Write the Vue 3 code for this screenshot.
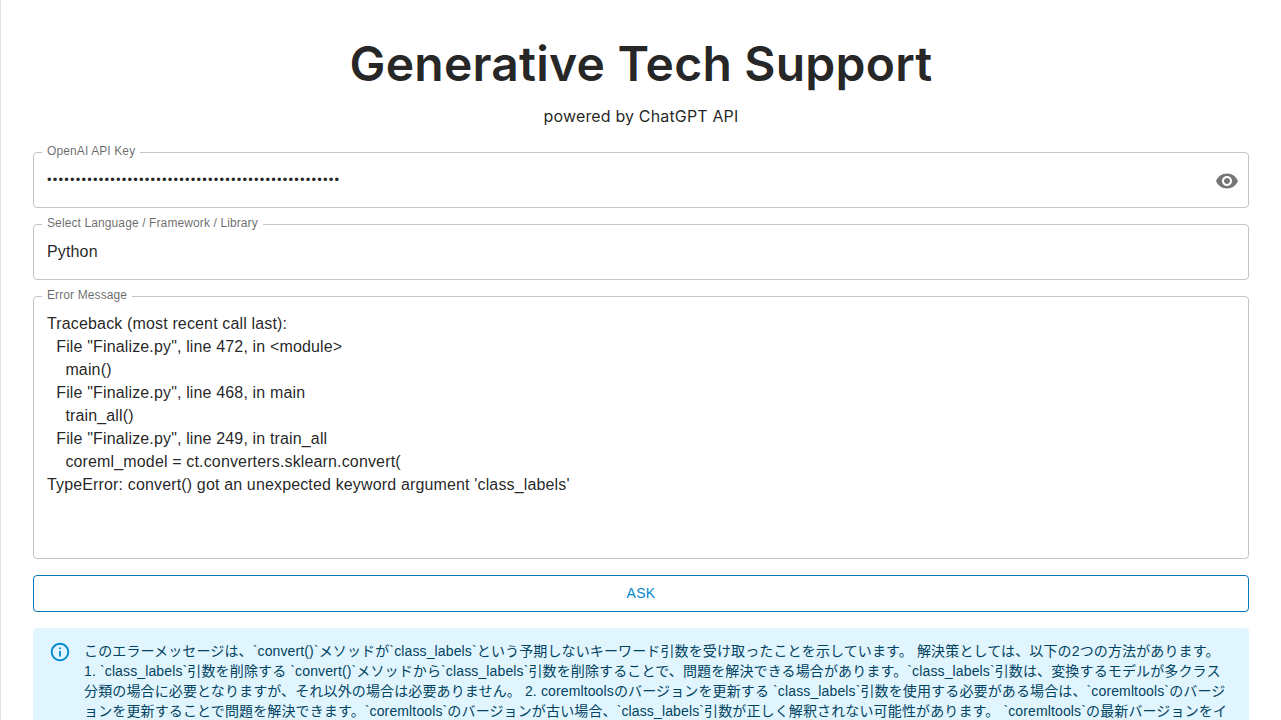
<script setup>
const traceback = `Traceback (most recent call last):
  File "Finalize.py", line 472, in <module>
    main()
  File "Finalize.py", line 468, in main
    train_all()
  File "Finalize.py", line 249, in train_all
    coreml_model = ct.converters.sklearn.convert(
TypeError: convert() got an unexpected keyword argument 'class_labels'`
const dots = '•'.repeat(51)
const answer = [
  'このエラーメッセージは、`convert()`メソッドが`class_labels`という予期しないキーワード引数を受け取ったことを示しています。 解決策としては、以下の2つの方法があります。',
  '1. `class_labels`引数を削除する `convert()`メソッドから`class_labels`引数を削除することで、問題を解決できる場合があります。`class_labels`引数は、変換するモデルが多クラス分類の場合に必要となりますが、それ以外の場合は必要ありません。 2. coremltoolsのバージョンを更新する `class_labels`引数を使用する必要がある場合は、`coremltools`のバージョンを更新することで問題を解決できます。`coremltools`のバージョンが古い場合、`class_labels`引数が正しく解釈されない可能性があります。 `coremltools`の最新バージョンをインストールしてください。'
]
</script>

<template>
  <div class="page">
    <header class="head">
      <h1>Generative Tech Support</h1>
      <p>powered by ChatGPT API</p>
    </header>

    <fieldset class="field key">
      <legend>OpenAI API Key</legend>
      <span class="dots">{{ dots }}</span>
      <svg class="eye" viewBox="0 0 24 24" width="24" height="24" aria-hidden="true">
        <path fill="#757575" d="M12 4.5C7 4.5 2.73 7.61 1 12c1.73 4.39 6 7.5 11 7.5s9.27-3.11 11-7.5c-1.73-4.39-6-7.5-11-7.5zM12 17c-2.76 0-5-2.24-5-5s2.24-5 5-5 5 2.24 5 5-2.24 5-5 5zm0-8c-1.66 0-3 1.34-3 3s1.34 3 3 3 3-1.34 3-3-1.34-3-3-3z" />
      </svg>
    </fieldset>

    <fieldset class="field lang">
      <legend>Select Language / Framework / Library</legend>
      <span>Python</span>
    </fieldset>

    <fieldset class="field error">
      <legend>Error Message</legend>
      <pre>{{ traceback }}</pre>
    </fieldset>

    <button class="ask" type="button">ASK</button>

    <section class="alert">
      <svg class="info" viewBox="0 0 24 24" width="22" height="22" aria-hidden="true">
        <path fill="#0288d1" d="M11 7h2v2h-2zm0 4h2v6h-2zm1-9C6.48 2 2 6.48 2 12s4.48 10 10 10 10-4.48 10-10S17.52 2 12 2zm0 18c-4.41 0-8-3.59-8-8s3.59-8 8-8 8 3.59 8 8-3.59 8-8 8z" />
      </svg>
      <div class="message">
        <p v-for="(line, i) in answer" :key="i">{{ line }}</p>
      </div>
    </section>
  </div>
</template>

<style scoped>
.page {
  box-sizing: border-box;
  height: 720px;
  overflow: hidden;
  padding: 0 32px;
  border-left: 1px solid #e0e0e0;
  display: flex;
  flex-direction: column;
  font-family: "Liberation Sans", Arial, sans-serif;
  color: rgba(0, 0, 0, 0.87);
}
.head {
  text-align: center;
  padding-top: 35px;
  margin-bottom: 26px;
}
h1 {
  margin: 0;
  font-family: Inter, sans-serif;
  font-size: 48px;
  line-height: 58px;
  font-weight: 600;
  letter-spacing: 0.22px;
}
.head p {
  margin: 13px 0 0;
  font-family: Inter, sans-serif;
  font-size: 16px;
  line-height: 20px;
  letter-spacing: 0.15px;
}
.field {
  box-sizing: border-box;
  position: relative;
  flex: none;
  margin: 0 0 16px;
  min-width: 0;
  padding: 0 13px;
  border: 1px solid #c4c4c4;
  border-radius: 4px;
  font-size: 16px;
  letter-spacing: 0.15px;
}
legend {
  padding: 0 5px 2px;
  margin-left: -5px;
  font-size: 12px;
  line-height: 12px;
  letter-spacing: 0.11px;
  color: rgba(0, 0, 0, 0.6);
}
.key,
.lang {
  height: 63px;
  margin-top: -7px;
}
.key span,
.lang span {
  display: block;
  line-height: 24px;
  margin-top: 9px;
}
.key .dots {
  font-size: 13px;
  letter-spacing: 1.2px;
}
.eye {
  position: absolute;
  right: 9px;
  top: 10px;
}
.error {
  height: 270px;
  margin-top: -7px;
}
pre {
  margin: 9px 0 0;
  font: inherit;
  line-height: 23px;
  white-space: pre-wrap;
}
.ask {
  flex: none;
  height: 37px;
  margin: 0 0 16px;
  padding: 0 0 1px;
  background: #fff;
  border: 1px solid #0277bd;
  border-radius: 4px;
  color: #0288d1;
  font-family: "Liberation Sans", Arial, sans-serif;
  font-size: 14px;
  letter-spacing: 0.4px;
}
.alert {
  flex: none;
  box-sizing: border-box;
  display: flex;
  gap: 13px;
  padding: 12px 16px;
  background: #e1f5fe;
  border-radius: 4px;
  color: #014361;
}
.info {
  flex: none;
  margin-top: 1px;
}
.message {
  font-family: "Liberation Sans", "Noto Sans CJK JP", sans-serif;
  font-size: 14px;
  line-height: 20px;
  letter-spacing: 0.13px;
  padding-top: 1px;
}
.message p {
  margin: 0;
}
</style>

<style>
html, body { margin: 0; overflow: hidden; background: #fff; }
</style>
